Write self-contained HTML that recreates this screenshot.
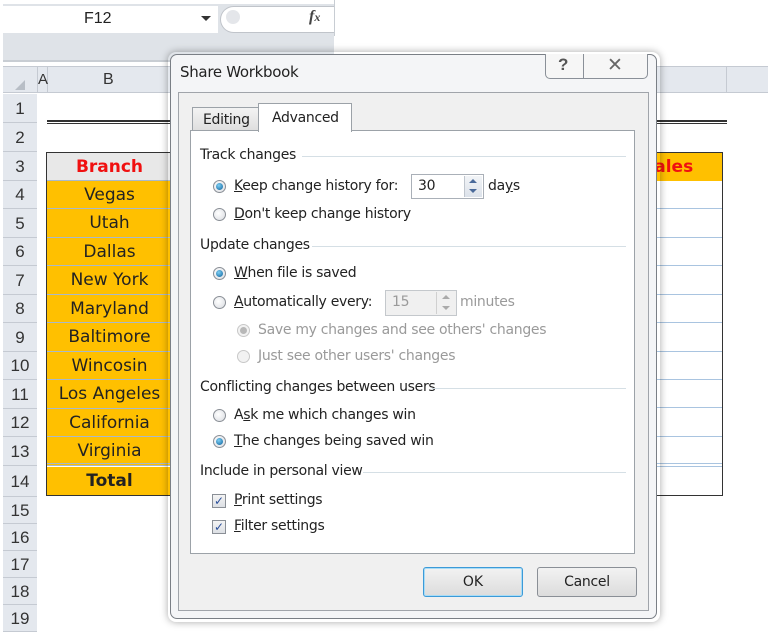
<!DOCTYPE html>
<html><head><style>
*{margin:0;padding:0;box-sizing:border-box}
body{width:768px;height:626px;overflow:hidden;background:#fff;font-family:"Liberation Sans",sans-serif;position:relative}
.a{position:absolute}
.rh{position:absolute;left:3px;width:34px;background:#e4e8ee;border-bottom:1px solid #c5cad2;font-size:17px;color:#333;text-align:center}
.cell{position:absolute;left:47px;width:125px;background:#ffc000;border-bottom:1px solid #a9b9c9;text-align:center;font-family:"DejaVu Sans",sans-serif;font-size:17px;color:#222}
.t{position:absolute;font-size:14px;color:#222;font-family:"DejaVu Sans",sans-serif;white-space:nowrap;letter-spacing:-0.3px}
.g{color:#9a9a9a}
.rad{position:absolute;width:13px;height:13px;border-radius:50%;border:1px solid #8a8f96;background:radial-gradient(circle at 40% 40%,#fff,#d8dbe0)}
.rad.on::after{content:"";position:absolute;left:2px;top:2px;width:7px;height:7px;border-radius:50%;background:radial-gradient(circle at 40% 35%,#7fd0f5,#0a5f9a)}
.rad.dis{border-color:#c8c8c8;background:#f2f2f2}
.rad.dis.on::after{background:#b8b8b8}
.sec{position:absolute;left:200px;font-size:14px;color:#222;font-family:"DejaVu Sans",sans-serif;letter-spacing:-0.3px}
.line{position:absolute;height:1px;background:#d5dfe5;right:12px}
.cb{position:absolute;left:212px;width:14px;height:14px;border:1px solid #8a8f96;background:linear-gradient(#f4f4f4,#dcdfe4);font-size:12px;line-height:12px;text-align:center;color:#2a4f9a}
u{text-decoration:underline}
#dc{position:absolute;left:0;top:2px;width:768px;height:626px}
</style></head><body>
<div class="a" style="left:0;top:0;width:768px;height:66px;background:#fff"></div>
<div class="a" style="left:3px;top:4px;width:331px;height:58px;background:#dfe3e8"></div>
<div class="a" style="left:3px;top:6px;width:215px;height:27px;background:#fff"></div>
<div class="a" style="left:84px;top:10px;font-size:16px;color:#222">F12</div>
<div class="a" style="left:201px;top:16px;width:0;height:0;border-left:5px solid transparent;border-right:5px solid transparent;border-top:5px solid #333"></div>
<div class="a" style="left:220px;top:6px;width:114px;height:27px;background:#fff;border-radius:14px 0 0 14px;border:1px solid #c0c4ca;border-right:none"></div>
<div class="a" style="left:226px;top:10px;width:14px;height:14px;border-radius:50%;background:#e4e6ea"></div>
<div class="a" style="left:309px;top:8px;font-family:'Liberation Serif',serif;font-style:italic;font-weight:bold;font-size:16px;color:#444">f<span style="font-size:12px">x</span></div>
<div class="a" style="left:3px;top:60px;width:331px;height:2px;background:#c8cdd3"></div>
<div class="a" style="left:334px;top:0;width:1px;height:36px;background:#c8cdd3"></div>
<div class="a" style="left:3px;top:66px;width:765px;height:27px;background:#e4e8ee;border-bottom:1px solid #c5cad2;border-top:1px solid #c5cad2"></div>
<div class="a" style="left:37px;top:66px;width:1px;height:27px;background:#c5cad2"></div>
<div class="a" style="left:47px;top:66px;width:1px;height:27px;background:#c5cad2"></div>
<div class="a" style="left:38px;top:71px;font-size:15px;color:#333">A</div>
<div class="a" style="left:103px;top:71px;font-size:16px;color:#333">B</div>
<div class="a" style="left:726px;top:66px;width:1px;height:27px;background:#c5cad2"></div>
<div class="a" style="left:15px;top:80px;width:0;height:0;border-left:10px solid transparent;border-bottom:10px solid #b8bec6"></div>
<div class="rh" style="top:94px;height:29px;line-height:29px">1</div>
<div class="rh" style="top:123px;height:29px;line-height:29px">2</div>
<div class="rh" style="top:152px;height:29px;line-height:29px">3</div>
<div class="rh" style="top:181px;height:28px;line-height:28px">4</div>
<div class="rh" style="top:209px;height:29px;line-height:29px">5</div>
<div class="rh" style="top:238px;height:28px;line-height:28px">6</div>
<div class="rh" style="top:266px;height:29px;line-height:29px">7</div>
<div class="rh" style="top:295px;height:28px;line-height:28px">8</div>
<div class="rh" style="top:323px;height:29px;line-height:29px">9</div>
<div class="rh" style="top:352px;height:28px;line-height:28px">10</div>
<div class="rh" style="top:380px;height:29px;line-height:29px">11</div>
<div class="rh" style="top:409px;height:28px;line-height:28px">12</div>
<div class="rh" style="top:437px;height:29px;line-height:29px">13</div>
<div class="rh" style="top:466px;height:31px;line-height:31px">14</div>
<div class="rh" style="top:497px;height:27px;line-height:27px">15</div>
<div class="rh" style="top:524px;height:27px;line-height:27px">16</div>
<div class="rh" style="top:551px;height:27px;line-height:27px">17</div>
<div class="rh" style="top:578px;height:27px;line-height:27px">18</div>
<div class="rh" style="top:605px;height:27px;line-height:27px">19</div>
<div class="a" style="left:47px;top:120px;width:680px;height:4px;border-top:2px solid #333;border-bottom:1px solid #333"></div>
<div class="a" style="left:46px;top:152px;width:677px;height:344px;border:1px solid #333"></div>
<div class="cell" style="top:153px;height:28px;line-height:28px;background:#e8e8e8;color:#f01010;font-weight:bold">Branch</div>
<div class="cell" style="top:181px;height:28px;line-height:28px">Vegas</div>
<div class="cell" style="top:209px;height:29px;line-height:29px">Utah</div>
<div class="cell" style="top:238px;height:28px;line-height:28px">Dallas</div>
<div class="cell" style="top:266px;height:29px;line-height:29px">New York</div>
<div class="cell" style="top:295px;height:28px;line-height:28px">Maryland</div>
<div class="cell" style="top:323px;height:29px;line-height:29px">Baltimore</div>
<div class="cell" style="top:352px;height:28px;line-height:28px">Wincosin</div>
<div class="cell" style="top:380px;height:29px;line-height:29px">Los Angeles</div>
<div class="cell" style="top:409px;height:28px;line-height:28px">California</div>
<div class="cell" style="top:437px;height:29px;line-height:29px;border-bottom:3px double #a9b9c9">Virginia</div>
<div class="cell" style="top:467px;height:28px;line-height:28px;font-weight:bold;border:none">Total</div>
<div class="a" style="left:630px;top:153px;width:92px;height:28px;background:#ffc000;color:#f01010;font-weight:bold;font-family:'DejaVu Sans',sans-serif;font-size:17px;line-height:28px;padding-left:12px">Sales</div>
<div class="a" style="left:640px;top:208px;width:82px;height:1px;background:#a9c4e0"></div>
<div class="a" style="left:640px;top:237px;width:82px;height:1px;background:#a9c4e0"></div>
<div class="a" style="left:640px;top:265px;width:82px;height:1px;background:#a9c4e0"></div>
<div class="a" style="left:640px;top:294px;width:82px;height:1px;background:#a9c4e0"></div>
<div class="a" style="left:640px;top:322px;width:82px;height:1px;background:#a9c4e0"></div>
<div class="a" style="left:640px;top:351px;width:82px;height:1px;background:#a9c4e0"></div>
<div class="a" style="left:640px;top:379px;width:82px;height:1px;background:#a9c4e0"></div>
<div class="a" style="left:640px;top:407px;width:82px;height:1px;background:#a9c4e0"></div>
<div class="a" style="left:640px;top:436px;width:82px;height:1px;background:#a9c4e0"></div>
<div class="a" style="left:640px;top:463px;width:82px;height:4px;border-top:1px solid #a9c4e0;border-bottom:1px solid #a9c4e0"></div>
<!-- dialog -->
<div class="a" style="left:168px;top:52px;width:492px;height:570px;border-radius:8px;box-shadow:0 0 8px rgba(0,0,0,.35)"></div>
<div class="a" style="left:170px;top:54px;width:487px;height:565px;background:#f4f5f7;border:1px solid #7a7f86;border-radius:7px"></div>
<div class="a" style="left:180px;top:63px;font-size:15px;color:#222;font-family:'DejaVu Sans',sans-serif;letter-spacing:-0.3px">Share Workbook</div>
<div class="a" style="left:545px;top:54px;width:103px;height:25px;border:1px solid #8a9098;border-top:none;border-radius:0 0 5px 5px;background:#f6f6f6"></div>
<div class="a" style="left:583px;top:54px;width:1px;height:24px;background:#8a9098"></div>
<div class="a" style="left:558px;top:55px;font-size:17px;font-weight:bold;color:#555">?</div>
<div class="a" style="left:607px;top:54px;font-size:19px;color:#666">✕</div>
<div class="a" style="left:178px;top:92px;width:471px;height:519px;background:#f0f0f0;border:1px solid #a0a4aa"></div>
<div class="a" style="left:192px;top:107px;width:67px;height:24px;background:linear-gradient(#f3f3f3,#dedede);border:1px solid #9ca2a8;border-bottom:none"></div>
<div class="a" style="left:203px;top:112px;font-size:14px;color:#222;font-family:'DejaVu Sans',sans-serif;letter-spacing:-0.3px">Editing</div>
<div class="a" style="left:190px;top:130px;width:445px;height:424px;background:#fff;border:1px solid #9ca2a8"></div>
<div class="a" style="left:258px;top:103px;width:94px;height:29px;background:#fff;border:1px solid #9ca2a8;border-bottom:none"></div>
<div class="a" style="left:272px;top:110px;font-size:14px;color:#222;font-family:'DejaVu Sans',sans-serif;letter-spacing:-0.3px">Advanced</div>
<div id="dc">
<div class="sec" style="top:145px">Track changes</div><div class="line" style="left:302px;top:154px;right:142px"></div>
<div class="rad on" style="left:213px;top:178px"></div><div class="t" style="left:234px;top:176px"><u>K</u>eep change history for:</div>
<div class="a" style="left:411px;top:172px;width:73px;height:25px;border:1px solid #aab0b8;background:#fff"></div>
<div class="t" style="left:418px;top:176px">30</div>
<div class="a" style="left:464px;top:174px;width:18px;height:21px;background:linear-gradient(#f2f4f7,#dce2ea);border-left:1px solid #c0c6ce"></div>
<div class="a" style="left:469px;top:177px;border-left:4px solid transparent;border-right:4px solid transparent;border-bottom:4px solid #4a6a9a"></div>
<div class="a" style="left:469px;top:187px;border-left:4px solid transparent;border-right:4px solid transparent;border-top:4px solid #4a6a9a"></div>
<div class="t" style="left:488px;top:176px">da<u>y</u>s</div>
<div class="rad" style="left:213px;top:206px"></div><div class="t" style="left:234px;top:204px"><u>D</u>on't keep change history</div>
<div class="sec" style="top:235px">Update changes</div><div class="line" style="left:312px;top:244px;right:142px"></div>
<div class="rad on" style="left:213px;top:265px"></div><div class="t" style="left:234px;top:263px"><u>W</u>hen file is saved</div>
<div class="rad" style="left:213px;top:294px"></div><div class="t" style="left:234px;top:292px"><u>A</u>utomatically every:</div>
<div class="a" style="left:385px;top:288px;width:72px;height:26px;border:1px solid #c4c8cc;background:#f0f0f0"></div>
<div class="t g" style="left:392px;top:292px">15</div>
<div class="a" style="left:436px;top:290px;width:19px;height:22px;background:#f0f0f0;border-left:1px solid #d0d0d0"></div>
<div class="a" style="left:442px;top:293px;border-left:4px solid transparent;border-right:4px solid transparent;border-bottom:4px solid #aaa"></div>
<div class="a" style="left:442px;top:304px;border-left:4px solid transparent;border-right:4px solid transparent;border-top:4px solid #aaa"></div>
<div class="t g" style="left:460px;top:292px">minutes</div>
<div class="rad dis on" style="left:237px;top:322px"></div><div class="t g" style="left:258px;top:320px">Save my changes and see others' changes</div>
<div class="rad dis" style="left:237px;top:348px"></div><div class="t g" style="left:258px;top:346px">Just see other users' changes</div>
<div class="sec" style="top:377px">Conflicting changes between users</div><div class="line" style="left:432px;top:386px;right:142px"></div>
<div class="rad" style="left:213px;top:407px"></div><div class="t" style="left:234px;top:405px">A<u>s</u>k me which changes win</div>
<div class="rad on" style="left:213px;top:433px"></div><div class="t" style="left:234px;top:431px"><u>T</u>he changes being saved win</div>
<div class="sec" style="top:461px">Include in personal view</div><div class="line" style="left:363px;top:470px;right:142px"></div>
<div class="cb" style="top:492px">✓</div><div class="t" style="left:234px;top:490px"><u>P</u>rint settings</div>
<div class="cb" style="top:518px">✓</div><div class="t" style="left:234px;top:516px"><u>F</u>ilter settings</div>
</div>
<div class="a" style="left:423px;top:567px;width:100px;height:30px;border:1px solid #3c9ad8;border-radius:3px;background:linear-gradient(#f2f2f2,#dcdcdc);box-shadow:inset 0 0 0 1px #a8dcf6;text-align:center;line-height:28px;font-size:14px;font-family:'DejaVu Sans',sans-serif;color:#222">OK</div>
<div class="a" style="left:537px;top:567px;width:100px;height:30px;border:1px solid #8a8f96;border-radius:3px;background:linear-gradient(#f2f2f2,#dcdcdc);text-align:center;line-height:28px;font-size:14px;font-family:'DejaVu Sans',sans-serif;color:#222;letter-spacing:-0.3px">Cancel</div>
</body></html>
